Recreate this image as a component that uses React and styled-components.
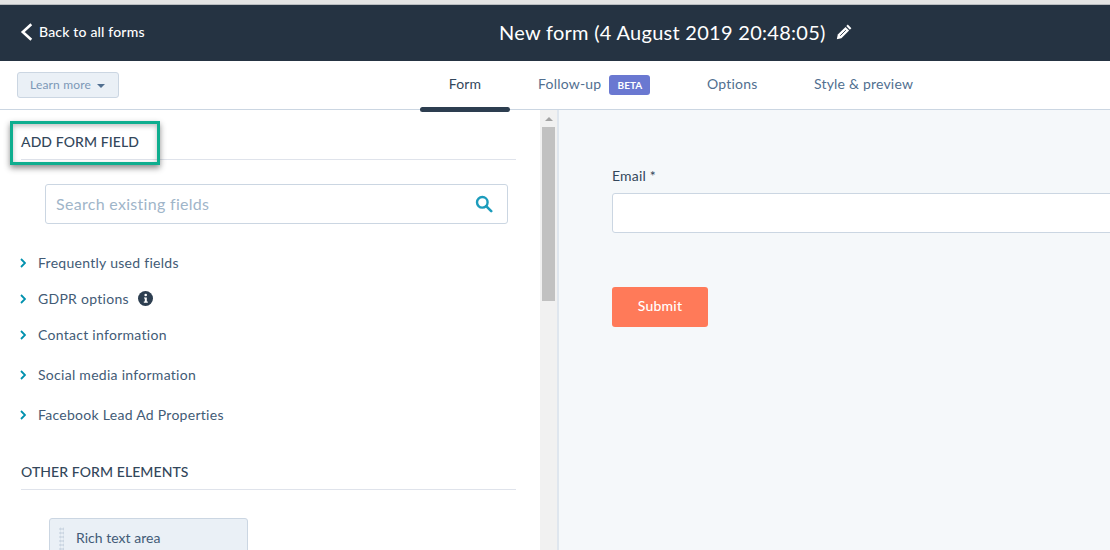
import React from "react";
import styled, { createGlobalStyle } from "styled-components";

const Global = createGlobalStyle`
  html, body { margin: 0; padding: 0; background: #fff; }
  body { font-family: Lato, "Open Sans", sans-serif; color: #33475b; }
`;

const Page = styled.div`
  width: 1110px;
  height: 550px;
  overflow: hidden;
  display: flex;
  flex-direction: column;
  position: relative;
`;
const TopStrip = styled.div`
  height: 4px;
  background: #e4e4e4;
  border-bottom: 1px solid #b9bcbf;
  flex: none;
`;
const Header = styled.header`
  height: 56px;
  flex: none;
  background: #253342;
  display: flex;
  align-items: center;
  position: relative;
  padding-left: 20px;
  color: #fff;
`;
const BackLink = styled.a`
  display: flex;
  align-items: center;
  gap: 6px;
  font-size: 14px;
  font-weight: 500;
  letter-spacing: 0.18px;
  color: #fff;
  width: 479px;
  flex: none;
  padding-bottom: 2px;
`;
const BackLabel = styled.span`
  padding-bottom: 1px;
`;
const Title = styled.h1`
  margin: 0;
  font-size: 20px;
  font-weight: 400;
  letter-spacing: 0.28px;
  display: flex;
  align-items: center;
  gap: 10px;
  white-space: nowrap;
  padding-bottom: 2px;
`;
const TabBar = styled.nav`
  height: 48px;
  flex: none;
  border-bottom: 1px solid #cbd6e2;
  display: flex;
  align-items: center;
  padding-left: 17px;
  position: relative;
`;
const LearnMore = styled.button`
  width: 102px;
  height: 26px;
  box-sizing: border-box;
  background: #eaf0f6;
  border: 1px solid #cbd6e2;
  border-radius: 3px;
  color: #7c98b6;
  font: 400 12px Lato, sans-serif;
  letter-spacing: 0.15px;
  display: flex;
  align-items: center;
  justify-content: center;
  gap: 6px;
  padding: 0 1px 2px 0;
  margin-right: 301px;
  flex: none;
`;
const Caret = styled.span`
  width: 0;
  height: 0;
  border-left: 4px solid transparent;
  border-right: 4px solid transparent;
  border-top: 4px solid #516f90;
  margin-top: 3px;
`;
const Tab = styled.a`
  display: flex;
  align-items: center;
  align-self: stretch;
  gap: 8px;
  position: relative;
  box-sizing: border-box;
  width: ${(p) => p.$w}px;
  justify-content: ${(p) => (p.$active ? "center" : "flex-start")};
  padding-left: ${(p) => p.$pl || 0}px;
  font-size: 14px;
  letter-spacing: 0.2px;
  padding-bottom: 4px;
  color: ${(p) => (p.$active ? "#33475b" : "#516f90")};
  white-space: nowrap;
  ${(p) =>
    p.$active &&
    `&::after {
      content: "";
      position: absolute;
      left: 0;
      right: 0;
      bottom: -3px;
      height: 5px;
      border-radius: 3px;
      background: #2d3e50;
    }`}
`;
const Beta = styled.span`
  background: #6a78d1;
  color: #fff;
  font-size: 10px;
  font-weight: 700;
  border-radius: 3px;
  width: 41px;
  height: 20px;
  margin-top: 4px;
  display: flex;
  align-items: center;
  justify-content: center;
  letter-spacing: 0;
`;
const Body = styled.div`
  flex: 1;
  min-height: 0;
  display: flex;
`;
const Sidebar = styled.aside`
  width: 540px;
  flex: none;
  box-sizing: border-box;
  padding: 11px 24px 0 21px;
  overflow: hidden;
`;
const SectionTitle = styled.h2`
  margin: 0;
  height: 39px;
  box-sizing: border-box;
  border-bottom: 1px solid #dfe3eb;
  font-size: 14px;
  font-weight: 500;
  letter-spacing: 0.09px;
  line-height: 20px;
  padding-top: 11px;
  color: #33475b;
`;
const SearchBox = styled.div`
  margin: 24px 8px 0 24px;
  height: 40px;
  box-sizing: border-box;
  border: 1px solid #cbd6e2;
  border-radius: 3px;
  display: flex;
  align-items: center;
  justify-content: space-between;
  padding: 0 14px 0 10px;
  font-size: 16px;
  letter-spacing: 0.3px;
  color: #9fb5c9;
`;
const SearchLabel = styled.span`
  padding-bottom: 2px;
`;
const FieldGroups = styled.ul`
  list-style: none;
  margin: 20px 0 0;
  padding: 0;
`;
const FieldGroup = styled.li`
  height: ${(p) => p.$h}px;
  display: flex;
  align-items: center;
  font-size: 14px;
  letter-spacing: 0.28px;
  color: #425b76;
`;
const Chevron = styled.svg`
  width: 6px;
  height: 10px;
  margin-left: -1px;
  margin-right: 12px;
  flex: none;
  position: relative;
  top: 1px;
`;
const InfoBadge = styled.svg`
  width: 15px;
  height: 15px;
  margin-left: 9px;
`;
const Spacer = styled.div`
  height: ${(p) => p.$h}px;
`;
const DraggableItem = styled.div`
  margin: 28px 0 0 28px;
  width: 199px;
  height: 50px;
  box-sizing: border-box;
  background: #eaf0f6;
  border: 1px solid #cbd6e2;
  border-radius: 3px;
  padding: 10px 0 0 9px;
  display: flex;
  gap: 12px;
  font-size: 14px;
  letter-spacing: 0.02px;
  line-height: 18px;
  color: #425b76;
`;
const Grip = styled.span`
  width: 5px;
  height: 40px;
  flex: none;
  margin-top: -2px;
  background-image: radial-gradient(#cbd6e2 1px, transparent 1.2px);
  background-size: 3px 4px;
`;
const Scrollbar = styled.div`
  width: 17px;
  flex: none;
  background: #f1f1f1;
  display: flex;
  flex-direction: column;
  align-items: center;
  padding-top: 7px;
`;
const ArrowUp = styled.span`
  width: 0;
  height: 0;
  border-left: 4px solid transparent;
  border-right: 4px solid transparent;
  border-bottom: 4px solid #a3a3a3;
`;
const Thumb = styled.div`
  width: 13px;
  height: 174px;
  margin-top: 6px;
  background: #c1c1c1;
`;
const Canvas = styled.main`
  flex: 1;
  min-width: 0;
  background: #f5f8fa;
  border-left: 2px solid #dfe6ee;
  padding: 57px 0 0 53px;
  overflow: hidden;
`;
const Label = styled.label`
  display: block;
  font-size: 14px;
  line-height: 18px;
  letter-spacing: 0.2px;
  color: #33475b;
  margin-bottom: 8px;
`;
const TextInput = styled.div`
  width: 600px;
  height: 40px;
  box-sizing: border-box;
  background: #fff;
  border: 1px solid #cbd6e2;
  border-radius: 3px;
`;
const Submit = styled.button`
  display: block;
  margin-top: 54px;
  width: 96px;
  height: 40px;
  border: 0;
  border-radius: 3px;
  background: #ff7a59;
  color: #fff;
  font: 500 14px Lato, sans-serif;
  letter-spacing: 0.2px;
  padding: 0 0 3px;
`;
const Callout = styled.div`
  position: absolute;
  left: 10px;
  top: 121px;
  width: 150px;
  height: 44px;
  box-sizing: border-box;
  border: 3px solid #0fae8f;
  box-shadow: 0 3px 6px rgba(0, 0, 0, 0.45), inset 0 2px 5px rgba(0, 0, 0, 0.25);
  pointer-events: none;
`;

const groups = [
  ["Frequently used fields", 36],
  ["GDPR options", 36, true],
  ["Contact information", 36],
  ["Social media information", 44],
  ["Facebook Lead Ad Properties", 36],
];

export default function App() {
  return (
    <Page>
      <Global />
      <TopStrip />
      <Header>
        <BackLink>
          <svg width="13" height="18" viewBox="0 0 13 18">
            <path d="M11.3 1.2 2.8 9l8.5 7.8" fill="none" stroke="#fff" strokeWidth="2.6" />
          </svg>
          <BackLabel>Back to all forms</BackLabel>
        </BackLink>
        <Title>
          New form (4 August 2019 20:48:05)
          <svg width="16" height="16" viewBox="0 0 16 16">
            <path d="M11.8.6 15.4 4.2 13.9 5.7 10.3 2.1z" fill="#fff" />
            <path d="M9.5 2.9l3.6 3.6-7.7 7.7-4.6 1 1-4.6z" fill="#fff" />
            <path d="M4.2 11.8l5.6-5.6" stroke="#253342" strokeWidth="0.9" />
          </svg>
        </Title>
      </Header>
      <TabBar>
        <LearnMore>
          Learn more <Caret />
        </LearnMore>
        <Tab $active $w={90}>Form</Tab>
        <Tab $w={197} $pl={28}>
          Follow-up <Beta>BETA</Beta>
        </Tab>
        <Tab $w={107}>Options</Tab>
        <Tab $w={110}>Style &amp; preview</Tab>
      </TabBar>
      <Body>
        <Sidebar>
          <SectionTitle>ADD FORM FIELD</SectionTitle>
          <SearchBox>
            <SearchLabel>Search existing fields</SearchLabel>
            <svg width="18" height="18" viewBox="0 0 18 18">
              <circle cx="7.3" cy="7.3" r="5.3" fill="none" stroke="#1c9cbc" strokeWidth="2.4" />
              <path d="m11.2 11.2 5 5" stroke="#1c9cbc" strokeWidth="2.6" strokeLinecap="round" />
            </svg>
          </SearchBox>
          <FieldGroups>
            {groups.map(([name, h, info]) => (
              <FieldGroup key={name} $h={h}>
                <Chevron viewBox="0 0 6 10">
                  <path d="M1 1l4 4-4 4" fill="none" stroke="#0091ae" strokeWidth="1.8" />
                </Chevron>
                {name}
                {info && (
                  <InfoBadge viewBox="0 0 15 15">
                    <circle cx="7.5" cy="7.5" r="7.5" fill="#2d3e50" />
                    <circle cx="7.7" cy="4" r="1.3" fill="#fff" />
                    <path d="M6 6.4h2.8v4.2h1v1.2H5.8v-1.2h1V7.6H6z" fill="#fff" />
                  </InfoBadge>
                )}
              </FieldGroup>
            ))}
          </FieldGroups>
          <Spacer $h={19} />
          <SectionTitle>OTHER FORM ELEMENTS</SectionTitle>
          <DraggableItem>
            <Grip />
            Rich text area
          </DraggableItem>
        </Sidebar>
        <Scrollbar>
          <ArrowUp />
          <Thumb />
        </Scrollbar>
        <Canvas>
          <Label>Email *</Label>
          <TextInput />
          <Submit>Submit</Submit>
        </Canvas>
      </Body>
      <Callout />
    </Page>
  );
}
